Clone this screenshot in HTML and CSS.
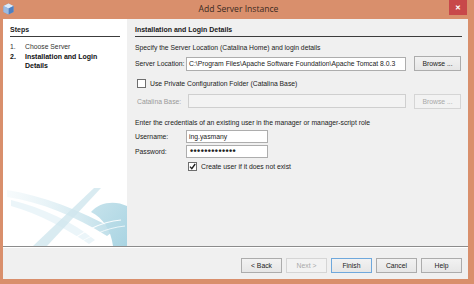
FILE: index.html
```html
<!DOCTYPE html>
<html lang="en">
<head>
    <meta charset="UTF-8">
    <title>Add Server Instance</title>
    <link rel="stylesheet" href="styles.css">
</head>
<body>
    <div class="window">
        <!-- title bar -->
        <div class="titlebar">
            <svg class="app-icon" width="11" height="12" viewBox="0 0 11 12">
                <polygon points="5.5,0.5 10.5,3 10.5,9 5.5,11.5 0.5,9 0.5,3" fill="#7fa8d8"/>
                <polygon points="5.5,0.5 10.5,3 5.5,5.5 0.5,3" fill="#dfeaf7"/>
                <polygon points="5.5,5.5 10.5,3 10.5,9 5.5,11.5" fill="#4f7fc0"/>
                <polygon points="0.5,3 5.5,5.5 5.5,11.5 0.5,9" fill="#9cbbe3"/>
            </svg>
            <div class="title">Add Server Instance</div>
            <div class="close-btn">&#x2715;</div>
        </div>

        <div class="frame">
            <div class="main">
                <!-- steps panel -->
                <div class="steps">
                    <div class="steps-body">
                        <div class="section-title">Steps</div>
                        <ol class="step-list">
                            <li><span class="num">1.</span><span>Choose Server</span></li>
                            <li class="current"><span class="num">2.</span><span>Installation and Login Details</span></li>
                        </ol>
                    </div>
                    <svg class="steps-art" width="124" height="58" viewBox="0 0 124 58">
                        <defs>
                            <linearGradient id="bandA" x1="0" y1="0" x2="1" y2="0">
                                <stop offset="0" stop-color="#e4f1f6" stop-opacity="0.3"/>
                                <stop offset="1" stop-color="#bcdde8"/>
                            </linearGradient>
                            <linearGradient id="blob" x1="0" y1="0" x2="1" y2="1">
                                <stop offset="0" stop-color="#c7e3ec"/>
                                <stop offset="1" stop-color="#a9d4e2"/>
                            </linearGradient>
                        </defs>
                        <path d="M4,2 C40,8 78,22 112,42 L104,48 C72,28 38,14 4,9 Z" fill="url(#bandA)"/>
                        <path d="M8,12 C40,20 70,34 92,52 L86,56 C62,40 36,26 8,18 Z" fill="#e6f2f7" opacity="0.8"/>
                        <polygon points="91,0 98,0 44,58 30,58" fill="#cfe6ee" opacity="0.8"/>
                        <path d="M124,18 C112,12 96,14 88,24 C100,30 108,42 110,58 L124,58 Z" fill="url(#blob)"/>
                        <path d="M60,58 C80,44 96,34 118,32" stroke="#ffffff" stroke-width="1.2" fill="none" opacity="0.9"/>
                        <path d="M70,58 C88,48 102,40 122,38" stroke="#ffffff" stroke-width="0.8" fill="none" opacity="0.9"/>
                    </svg>
                </div>

                <!-- form panel -->
                <div class="content">
                    <div class="section-title">Installation and Login Details</div>
                    <p class="hint">Specify the Server Location (Catalina Home) and login details</p>

                    <div class="row row-location">
                        <label class="label">Server Location:</label>
                        <div class="field field-wide">C:\Program Files\Apache Software Foundation\Apache Tomcat 8.0.3</div>
                        <button class="btn btn-browse">Browse ...</button>
                    </div>

                    <div class="check-row">
                        <span class="checkbox"></span>
                        <span>Use Private Configuration Folder (Catalina Base)</span>
                    </div>

                    <div class="row row-base">
                        <label class="label label-disabled">Catalina Base:</label>
                        <div class="field field-base disabled"></div>
                        <button class="btn btn-browse" disabled>Browse ...</button>
                    </div>

                    <p class="hint hint-cred">Enter the credentials of an existing user in the manager or manager-script role</p>

                    <div class="row row-user">
                        <label class="label">Username:</label>
                        <div class="field field-short">ing.yasmany</div>
                    </div>
                    <div class="row row-pass">
                        <label class="label">Password:</label>
                        <div class="field field-short dots">&bull;&bull;&bull;&bull;&bull;&bull;&bull;&bull;&bull;&bull;&bull;&bull;&bull;</div>
                    </div>

                    <div class="check-row check-create">
                        <span class="checkbox checked">
                            <svg width="7" height="7" viewBox="0 0 7 7"><path d="M1,3.6 L2.8,5.6 L6.2,1" stroke="#222" stroke-width="1.4" fill="none"/></svg>
                        </span>
                        <span>Create user if it does not exist</span>
                    </div>
                </div>
            </div>

            <div class="button-bar">
                <button class="btn">&lt; Back</button>
                <button class="btn" disabled>Next &gt;</button>
                <button class="btn btn-default">Finish</button>
                <button class="btn">Cancel</button>
                <button class="btn">Help</button>
            </div>
        </div>
    </div>
</body>
</html>
```

FILE: styles.css
```css
* {
    margin: 0;
    padding: 0;
    box-sizing: border-box;
}

body {
    font-family: 'Liberation Sans', Arial, sans-serif;
    font-size: 6.8px;
    color: #222;
    background: #d98f6c;
}

.window {
    width: 474px;
    height: 284px;
    background: #d98f6c;
}

/* title bar */
.titlebar {
    height: 19px;
    display: flex;
    align-items: flex-start;
}

.app-icon {
    margin: 3px 0 0 3px;
}

.title {
    flex: 1;
    text-align: center;
    font-family: 'Open Sans', 'Liberation Sans', sans-serif;
    font-size: 8.6px;
    line-height: 18px;
    color: #3a2a22;
    padding-left: 14px;
}

.close-btn {
    width: 18px;
    height: 15px;
    margin-right: 7px;
    background: #c8484a;
    color: #fff;
    font-size: 7px;
    font-weight: bold;
    line-height: 15px;
    text-align: center;
}

/* frame */
.frame {
    margin: 0 6px 0 3px;
    height: 260px;
    background: #f0f0f0;
    display: flex;
    flex-direction: column;
}

.main {
    height: 228px;
    display: flex;
    border-bottom: 1px solid #8c8c8c;
}

.steps {
    width: 124px;
    background: #fff;
    display: flex;
    flex-direction: column;
}

.steps-body {
    padding: 6px 7px 0 7px;
}

.steps-art {
    margin-top: auto;
    display: block;
}

.section-title {
    font-weight: bold;
    font-size: 7px;
    line-height: 10px;
    padding-bottom: 1px;
    border-bottom: 1px solid #3c3c3c;
    color: #1a1a1a;
}

.step-list {
    list-style: none;
    margin-top: 5px;
    line-height: 9.5px;
}

.step-list li {
    display: grid;
    grid-template-columns: 15px 1fr;
    color: #333;
}

.step-list li.current {
    font-weight: bold;
    color: #111;
    font-size: 7px;
}

/* form panel */
.content {
    flex: 1;
    padding: 6px 6px 0 8px;
}

.hint {
    margin-top: 5.5px;
    line-height: 9px;
}

.hint-cred {
    margin-top: 10px;
}

.row {
    display: flex;
    align-items: center;
}

.row-location {
    margin-top: 4.5px;
    height: 15px;
}

.row-base {
    margin-top: 5px;
    height: 14px;
}

.row-user {
    margin-top: 2.5px;
    height: 13px;
}

.row-pass {
    margin-top: 2px;
    height: 13px;
}

.label {
    width: 51px;
    flex-shrink: 0;
}

.label-disabled {
    color: #9a9a9a;
    margin-left: 2px;
}

.field {
    height: 100%;
    background: #fff;
    border: 1px solid #adadad;
    padding: 0 2px;
    line-height: 12px;
    white-space: nowrap;
    overflow: hidden;
}

.field-wide {
    width: 220px;
    height: 14px;
}

.field-base {
    width: 218px;
}

.field.disabled {
    background: #f3f3f3;
    border-color: #cfcfcf;
}

.field-short {
    width: 82px;
}

.dots {
    font-size: 9px;
    font-weight: bold;
    letter-spacing: 0.4px;
    line-height: 11px;
    padding-left: 3px;
}

.check-row {
    display: flex;
    align-items: center;
    gap: 4px;
    height: 12px;
    margin-top: 6px;
    padding-left: 2px;
}

.check-create {
    margin-top: 3px;
    padding-left: 53px;
}

.checkbox {
    width: 9px;
    height: 9px;
    border: 1px solid #6e6e6e;
    background: #fff;
    display: flex;
    align-items: center;
    justify-content: center;
}

/* buttons */
.btn {
    font-family: inherit;
    font-size: 6.8px;
    color: #222;
    width: 41px;
    height: 15px;
    border: 1px solid #acacac;
    background: linear-gradient(#f2f2f2, #e6e6e6);
}

.btn:disabled {
    color: #a8a8a8;
    border-color: #d5d5d5;
    background: #f2f2f2;
}

.btn-default {
    border-color: #6fa8dc;
}

.btn-browse {
    width: 47px;
    margin-left: 8px;
}

.button-bar {
    flex: 1;
    display: flex;
    justify-content: flex-end;
    gap: 4px;
    padding: 10px 6px 0 0;
    border-top: 1px solid #fff;
}
```
